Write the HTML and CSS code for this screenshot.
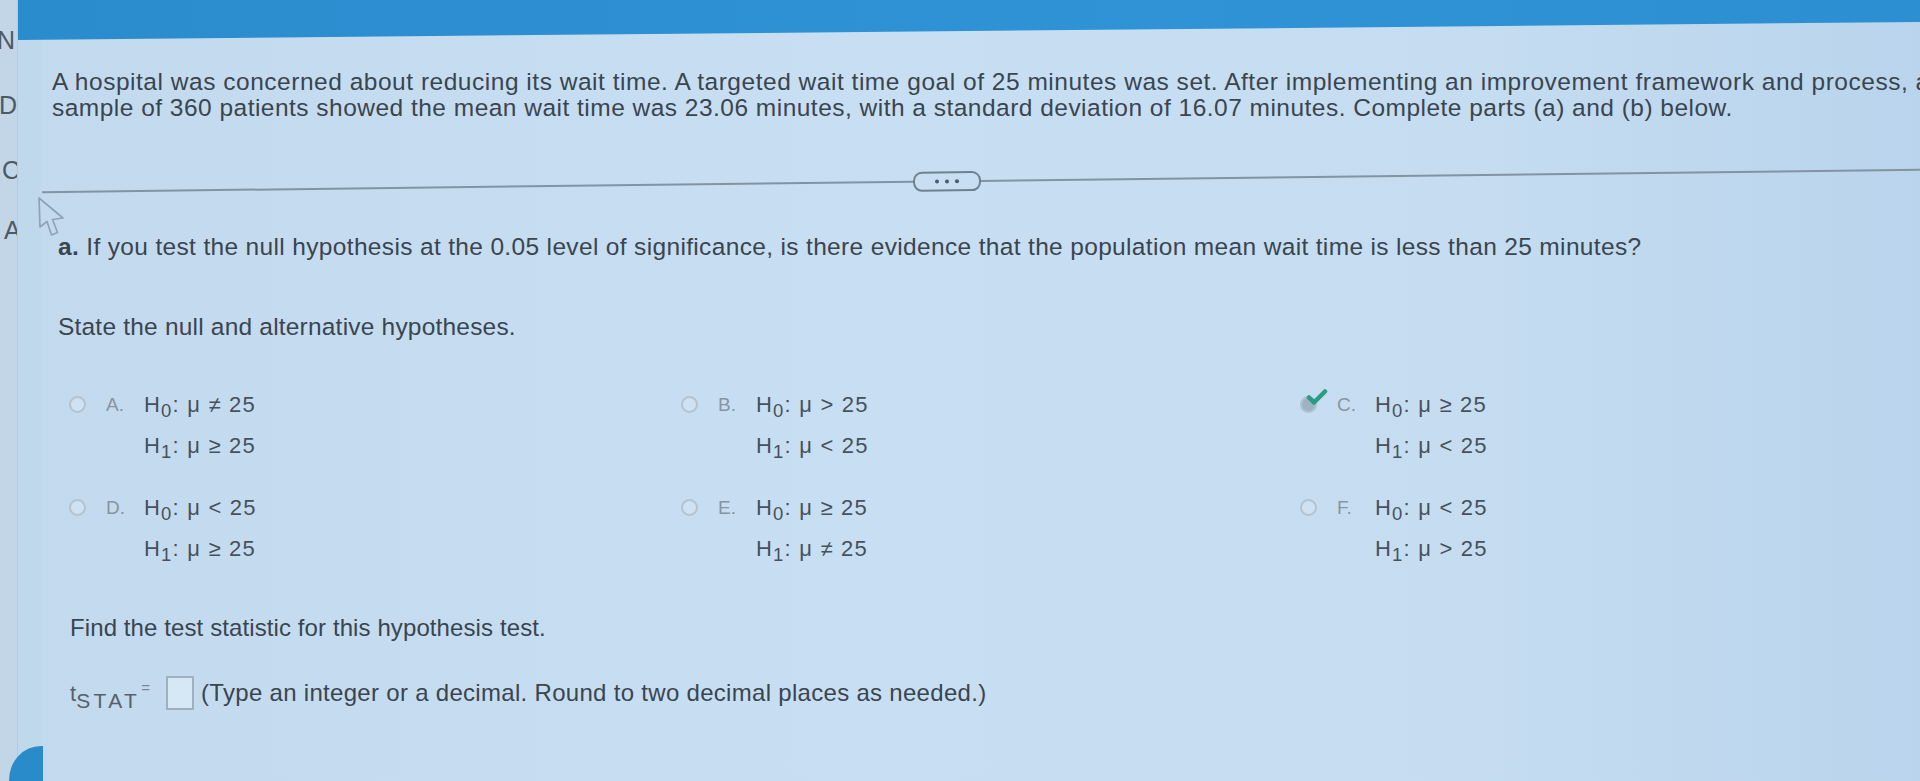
FILE: index.html
```html
<!DOCTYPE html>
<html lang="en">
<head>
<meta charset="utf-8">
<title>Hypothesis test</title>
<link rel="stylesheet" href="styles.css">
</head>
<body>
<div class="screen">
  <aside class="rail">
    <span class="rail-letter l-n">N</span>
    <span class="rail-letter l-d">D</span>
    <span class="rail-letter l-c">C</span>
    <span class="rail-letter l-a">A</span>
  </aside>
  <main class="pane">
    <div class="topbar"></div>
    <div class="content">
      <p class="stem"><span class="stem-line one">A hospital was concerned about reducing its wait time. A targeted wait time goal of 25 minutes was set. After implementing an improvement framework and process, a</span><span class="stem-line two">sample of 360 patients showed the mean wait time was 23.06 minutes, with a standard deviation of 16.07 minutes. Complete parts (a) and (b) below.</span></p>
      <div class="divider">
        <span class="rule"></span>
        <span class="more"><i></i><i></i><i></i></span>
        <span class="rule"></span>
      </div>
      <p class="question"><b>a.</b> If you test the null hypothesis at the 0.05 level of significance, is there evidence that the population mean wait time is less than 25 minutes?</p>
      <p class="prompt">State the null and alternative hypotheses.</p>
      <div class="options">
        <div class="option">
          <span class="radio"></span><span class="letter">A.</span>
          <div class="formula"><span>H<sub>0</sub>: μ ≠ 25</span><span>H<sub>1</sub>: μ ≥ 25</span></div>
        </div>
        <div class="option">
          <span class="radio"></span><span class="letter">B.</span>
          <div class="formula"><span>H<sub>0</sub>: μ &gt; 25</span><span>H<sub>1</sub>: μ &lt; 25</span></div>
        </div>
        <div class="option selected">
          <span class="radio"><svg class="check" viewBox="0 0 22 18" width="22" height="18"><path d="M3 8.5 L8 13.5 L19 2.5" fill="none" stroke="#2b9a86" stroke-width="4.5" stroke-linecap="round" stroke-linejoin="round"/></svg></span><span class="letter">C.</span>
          <div class="formula"><span>H<sub>0</sub>: μ ≥ 25</span><span>H<sub>1</sub>: μ &lt; 25</span></div>
        </div>
        <div class="option">
          <span class="radio"></span><span class="letter">D.</span>
          <div class="formula"><span>H<sub>0</sub>: μ &lt; 25</span><span>H<sub>1</sub>: μ ≥ 25</span></div>
        </div>
        <div class="option">
          <span class="radio"></span><span class="letter">E.</span>
          <div class="formula"><span>H<sub>0</sub>: μ ≥ 25</span><span>H<sub>1</sub>: μ ≠ 25</span></div>
        </div>
        <div class="option">
          <span class="radio"></span><span class="letter">F.</span>
          <div class="formula"><span>H<sub>0</sub>: μ &lt; 25</span><span>H<sub>1</sub>: μ &gt; 25</span></div>
        </div>
      </div>
      <p class="find">Find the test statistic for this hypothesis test.</p>
      <div class="answer">
        <span class="tstat">t<sub>STAT</sub></span><span class="eq">=</span><span class="box"></span><span class="hint">(Type an integer or a decimal. Round to two decimal places as needed.)</span>
      </div>
    </div>
  </main>
  <svg class="cursor" viewBox="0 0 30 44" width="30" height="44"><path d="M2 2 L3 31 L10 25.5 L14.5 39 L20.5 36.5 L15.5 23.5 L26 22 Z" fill="none" stroke="#8fa3b5" stroke-width="1.7" stroke-linejoin="round"/></svg>
  <div class="blob"></div>
</div>
</body>
</html>
```
FILE: styles.css
```css
html, body {
  margin: 0;
  padding: 0;
}
body {
  width: 1920px;
  height: 781px;
  overflow: hidden;
  background: #c5dcf0;
  font-family: "Liberation Sans", Arial, sans-serif;
  color: #3a4550;
}
.screen {
  position: relative;
  display: flex;
  width: 1920px;
  height: 781px;
  overflow: hidden;
  background: linear-gradient(90deg, #c3daee 0%, #c8dff3 45%, #c6ddf1 75%, #b9d4ec 100%);
}
.rail {
  width: 18px;
  flex: none;
  background: #c2d6e8;
  border-right: 1px solid #b3c9dc;
  display: flex;
  flex-direction: column;
  overflow: hidden;
  padding-top: 27px;
  box-sizing: border-box;
}
.rail-letter {
  font-size: 25px;
  line-height: 26px;
  color: #4d5965;
  display: block;
}
.l-n { margin-left: -3px; }
.l-d { margin-top: 39px; margin-left: -1px; }
.l-c { margin-top: 39px; margin-left: 2px; }
.l-a { margin-top: 34px; margin-left: 4px; }
.pane {
  flex: 1;
  min-width: 0;
  display: flex;
  flex-direction: column;
  background: linear-gradient(90deg, #c0d8ec 0, #c0d8ec 22px, transparent 24px);
}
.topbar {
  height: 41px;
  flex: none;
  background: linear-gradient(90deg, #2b8ccd, #2f93d6 60%, #2c8fd2);
  clip-path: polygon(0 0, 100% 0, 100% 22px, 0 40px);
}
.content {
  padding-left: 34px;
  display: flex;
  flex-direction: column;
}
.stem {
  margin: 28px 0 0 0;
  font-size: 24.5px;
  line-height: 26px;
  white-space: nowrap;
}
.stem-line {
  display: block;
}
.stem-line.one { letter-spacing: 0.52px; }
.stem-line.two { letter-spacing: 0.48px; }
.divider {
  display: flex;
  align-items: center;
  margin: 51px 0 0 -10px;
  height: 18px;
  transform: rotate(-0.68deg);
  transform-origin: 50% 50%;
}
.rule {
  flex: 1;
  height: 0;
  border-top: 2px solid #8393a2;
}
.rule:first-child {
  flex: none;
  width: 871px;
}
.more {
  width: 64px;
  height: 16px;
  border: 2px solid #6f8090;
  border-radius: 9px;
  display: flex;
  align-items: center;
  justify-content: center;
  gap: 6px;
  flex: none;
}
.more i {
  width: 4px;
  height: 4px;
  border-radius: 50%;
  background: #4c5c6b;
  display: block;
}
.question {
  margin: 44px 0 0 6px;
  font-size: 24.5px;
  line-height: 26px;
  letter-spacing: 0.34px;
  white-space: nowrap;
}
.question b {
  font-weight: bold;
}
.prompt {
  margin: 54px 0 0 6px;
  font-size: 24.5px;
  line-height: 26px;
  letter-spacing: 0.2px;
}
.options {
  display: grid;
  grid-template-columns: 612px 619px 1fr;
  row-gap: 21px;
  margin: 44px 0 0 17px;
}
.option {
  display: flex;
  align-items: flex-start;
}
.radio {
  position: relative;
  width: 13px;
  height: 13px;
  border: 2px solid #b4c3d0;
  border-radius: 50%;
  background: #cfe2f3;
  flex: none;
  margin-top: 12px;
}
.selected .radio {
  background: #9db3c3;
  border-color: #b0c2d0;
}
.check {
  position: absolute;
  left: 4px;
  top: -9px;
}
.letter {
  width: 38px;
  margin-left: 20px;
  font-size: 19px;
  line-height: 41px;
  color: #8794a1;
  flex: none;
}
.formula {
  display: flex;
  flex-direction: column;
  font-size: 22px;
  line-height: 41px;
  letter-spacing: 1.2px;
  color: #46515c;
}
.formula span {
  display: block;
  white-space: nowrap;
}
.formula sub {
  font-size: 84%;
  vertical-align: -5px;
  line-height: 0;
}
.find {
  margin: 46px 0 0 18px;
  font-size: 24px;
  line-height: 26px;
  letter-spacing: 0.1px;
}
.answer {
  display: flex;
  align-items: center;
  margin: 35px 0 0 18px;
  height: 34px;
}
.tstat {
  font-size: 22px;
  color: #55616c;
  line-height: 20px;
  margin-top: 2px;
}
.tstat sub {
  font-size: 21px;
  letter-spacing: 3.4px;
  vertical-align: -7px;
  line-height: 0;
}
.eq {
  font-size: 15px;
  color: #7c8994;
  margin: -12px 0 0 1px;
}
.box {
  width: 24px;
  height: 30px;
  border: 2px solid #9fb0bf;
  background: #d6e7f6;
  flex: none;
  margin-left: 16px;
}
.hint {
  margin-left: 7px;
  font-size: 24px;
  letter-spacing: 0.3px;
  white-space: nowrap;
}
.cursor {
  position: absolute;
  left: 37px;
  top: 196px;
}
.blob {
  position: absolute;
  left: 9px;
  top: 746px;
  width: 34px;
  height: 40px;
  background: #2a8bcb;
  border-top-left-radius: 32px 34px;
}
```
